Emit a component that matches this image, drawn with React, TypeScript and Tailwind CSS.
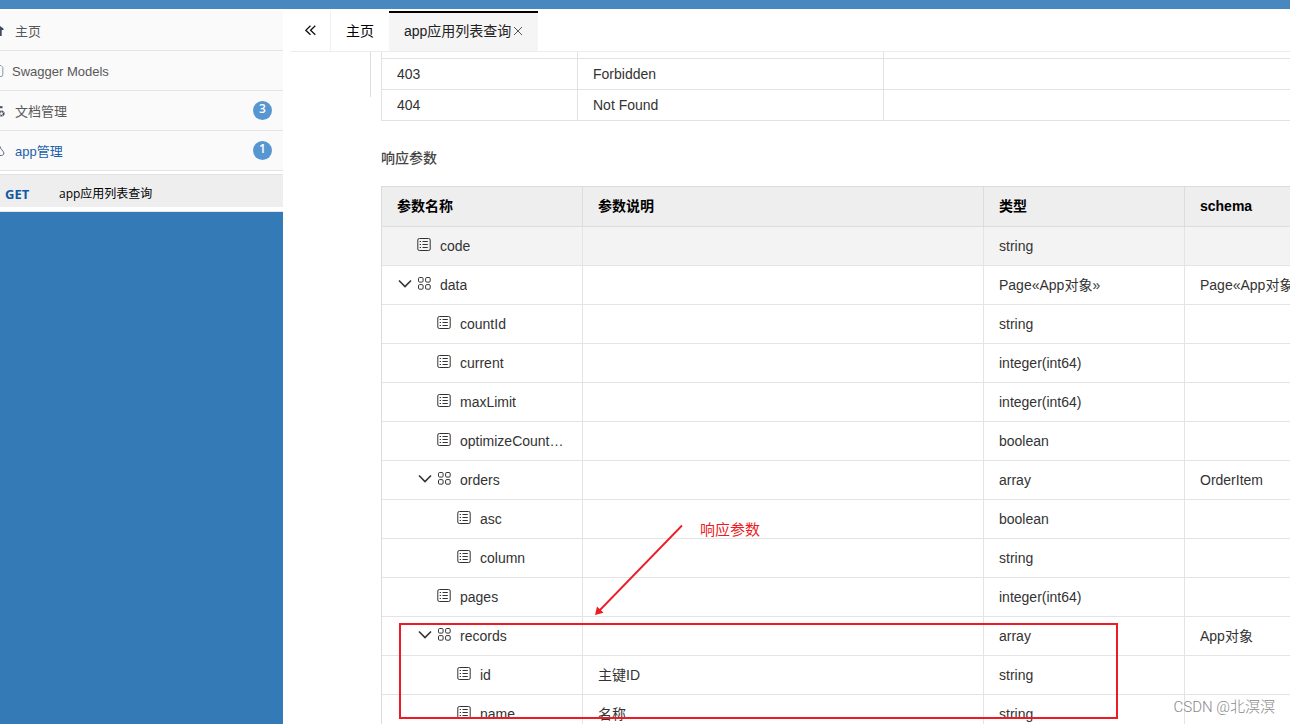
import React from "react";

const cjk = "font-['Liberation_Sans','Noto_Sans_CJK_SC',sans-serif]";

type Param = {
  name: string;
  level: number;
  group?: boolean;
  desc?: string;
  type: string;
  schema?: string;
};

const params: Param[] = [
  { name: "code", level: 0, type: "string" },
  { name: "data", level: 0, group: true, type: "Page«App对象»", schema: "Page«App对象»" },
  { name: "countId", level: 1, type: "string" },
  { name: "current", level: 1, type: "integer(int64)" },
  { name: "maxLimit", level: 1, type: "integer(int64)" },
  { name: "optimizeCountSql", level: 1, type: "boolean" },
  { name: "orders", level: 1, group: true, type: "array", schema: "OrderItem" },
  { name: "asc", level: 2, type: "boolean" },
  { name: "column", level: 2, type: "string" },
  { name: "pages", level: 1, type: "integer(int64)" },
  { name: "records", level: 1, group: true, type: "array", schema: "App对象" },
  { name: "id", level: 2, desc: "主键ID", type: "string" },
  { name: "name", level: 2, desc: "名称", type: "string" },
];

const indents = ["pl-0", "pl-5", "pl-10"];

function LeafIcon() {
  return (
    <svg width="14" height="14" viewBox="0 0 14 14" fill="none" stroke="#333" className="shrink-0">
      <rect x="0.8" y="0.5" width="12.4" height="12" rx="1.5" />
      <path d="M2.7 3.5h1.300M5.500 3.500h5.300M2.700 6.500h1.300M5.500 6.500h5.300M2.700 9.500h1.300M5.500 9.500h5.300" />
    </svg>
  );
}

function GroupIcon() {
  return (
    <svg width="14" height="14" viewBox="0 0 14 14" fill="none" stroke="#333" className="shrink-0">
      <rect x="1.500" y="0.500" width="4.600" height="4.600" rx="1.200" />
      <rect x="8.600" y="0.500" width="4.600" height="4.600" rx="1.200" />
      <rect x="1.500" y="7.600" width="4.600" height="4.600" rx="1.200" />
      <rect x="8.600" y="7.600" width="4.600" height="4.600" rx="1.200" />
    </svg>
  );
}

function HomeIcon() {
  return (
    <svg width="13" height="13" viewBox="0 0 13 13" fill="#3f4a66">
      <path d="M5.500 0 11.500 4.500v1.500H9.700V12H6.500V8H4.500v4H1.500V6H0V4.500z" />
    </svg>
  );
}

function ModelIcon() {
  return (
    <svg width="13" height="13" viewBox="0 0 13 13" fill="none" stroke="#8298ac">
      <path d="M1.500 3.500h5.500v9h-5.500zM4.500 3V1.500h4.500l1.800 1.800v7.500q0 1.700-1.700 1.700H7" />
    </svg>
  );
}

function CogsIcon() {
  return (
    <svg width="14" height="14" viewBox="0 0 14 14" fill="none" stroke="#444c58">
      <circle cx="4" cy="5.500" r="3" strokeWidth="2" strokeDasharray="1.800 .6" />
      <circle cx="9.500" cy="9.500" r="2.200" strokeWidth="1.800" strokeDasharray="1.800 .5" />
      <path d="M8 3.200h2.500" strokeWidth="2" />
    </svg>
  );
}

function CloudIcon() {
  return (
    <svg width="13" height="13" viewBox="0 0 13 13" fill="none" stroke="#5c6a86">
      <path d="M3.500 11.500h6a2.300 2.300 0 0 0 1.800-3.800C10.500 6 9 5.500 8.500 4 8.200 2 7 1.500 6 1.500c-2 0-3 2-3 4-3 1-3 6 .5 6z" />
    </svg>
  );
}

const menu = [
  { label: "主页", icon: <HomeIcon />, box: "w-[23px]" },
  { label: "Swagger Models", icon: <ModelIcon />, box: "w-5" },
  { label: "文档管理", icon: <CogsIcon />, box: "w-[23px]", count: 3 },
  { label: "app管理", icon: <CloudIcon />, box: "w-[23px]", count: 1, active: true },
];

function Sidebar() {
  return (
    <nav className="w-[283px] shrink-0 overflow-hidden bg-[#337ab7]">
      <ul className="border-t-2 border-white bg-[#fafafa] text-[13px]">
        {menu.map((m) => (
          <li key={m.label} className="border-b border-[#e4e4e6]">
            <a
              href="#"
              className={`-ml-2 flex h-[39px] items-center pr-[11px] ${m.active ? "text-[#1a5fa8]" : "text-[#585858]"}`}
            >
              <span className={`shrink-0 ${m.box}`}>{m.icon}</span>
              <span className="flex-1 pt-0.5">{m.label}</span>
              {m.count && (
                <span className="size-[19px] rounded-full bg-[#5796d0] text-center font-['Open_Sans',sans-serif] text-xs leading-4 font-semibold text-white">
                  {m.count}
                </span>
              )}
            </a>
          </li>
        ))}
      </ul>
      <div className="border-b border-[#e5e5e5] bg-white pt-[3px] pb-1">
        <a
          href="#"
          className="flex h-[33px] items-center border-t border-[#e0e2e6] bg-[#eee] pt-1.5 pl-[5px] font-['Open_Sans','Noto_Sans_CJK_SC',sans-serif] text-xs leading-4 text-black"
        >
          <span className="w-[54px] text-[13px] font-bold text-[#0f59a5]">GET</span>
          <span>app应用列表查询</span>
        </a>
      </div>
    </nav>
  );
}

function TabBar() {
  return (
    <div className="flex h-[43px] shrink-0 border-b border-[#ececec] pt-[2px] text-sm text-black">
      <button type="button" aria-label="收起" className="flex w-10 items-center justify-center border-r border-[#f0f0f0] pb-0.5">
        <svg width="11" height="11" viewBox="0 0 11 11" fill="none" stroke="#111" strokeWidth="1.300">
          <path d="M5.500 .8.8 5.300l4.700 4.500M10.300.8 5.600 5.300l4.700 4.500" />
        </svg>
      </button>
      <button type="button" className="w-[58px]">主页</button>
      <div className="flex items-center border-t-2 border-black bg-[#f5f5f5] px-[15px] pb-0.5 text-[#222]">
        <button type="button">app应用列表查询</button>
        <button type="button" aria-label="关闭" className="ml-0.5">
          <svg width="10" height="10" viewBox="0 0 10 10" stroke="#555" fill="none">
            <path d="m1 1 8 8M9 1 1 9" />
          </svg>
        </button>
      </div>
    </div>
  );
}

function StatusTable() {
  const cell = "border-r border-b border-[#e2e2e2] px-[15px]";
  return (
    <table className="w-[1205px] table-fixed border-separate border-spacing-0 border-l border-[#e2e2e2]">
      <colgroup>
        <col className="w-[196px]" />
        <col className="w-[306px]" />
        <col />
      </colgroup>
      <tbody>
        <tr className="h-[7px]">
          <td className={cell} />
          <td className={cell} />
          <td className={cell} />
        </tr>
        {[
          ["403", "Forbidden"],
          ["404", "Not Found"],
        ].map(([code, text]) => (
          <tr key={code} className="h-[31px]">
            <td className={cell}>{code}</td>
            <td className={cell}>{text}</td>
            <td className={cell} />
          </tr>
        ))}
      </tbody>
    </table>
  );
}

function ParamTable() {
  const cell = "border-r border-b border-[#e4e4e4] px-[15px]";
  return (
    <table className="w-[1205px] table-fixed border-separate border-spacing-0 border-t border-l border-[#dcdcdc]">
      <colgroup>
        <col className="w-[201px]" />
        <col className="w-[401px]" />
        <col className="w-[201px]" />
        <col className="w-[401px]" />
      </colgroup>
      <thead>
        <tr className="h-10 bg-[#eee] text-left text-black">
          {["参数名称", "参数说明", "类型", "schema"].map((h) => (
            <th key={h} className="border-r border-b border-[#dcdcdc] px-[15px] pb-0.5 font-bold">
              {h}
            </th>
          ))}
        </tr>
      </thead>
      <tbody>
        {params.map((p, i) => (
          <tr key={p.name} className={`h-[39px] ${i === 0 ? "bg-[#f3f3f3]" : ""}`}>
            <td className={cell}>
              <div className={`flex items-center ${indents[p.level]}`}>
                <span className="-mt-1 w-5 shrink-0 pl-px">
                  {p.group && (
                    <svg width="14" height="14" viewBox="0 0 14 14" fill="none" stroke="#333" strokeWidth="1.600">
                      <path d="m1 4.500 6 6 6-6" />
                    </svg>
                  )}
                </span>
                <span className="-mt-0.5 w-[23px] shrink-0">{p.group ? <GroupIcon /> : <LeafIcon />}</span>
                <span className="truncate">{p.name}</span>
              </div>
            </td>
            <td className={cell}>{p.desc}</td>
            <td className={cell}>{p.type}</td>
            <td className={cell}>{p.schema}</td>
          </tr>
        ))}
      </tbody>
    </table>
  );
}

function Annotations() {
  return (
    <div className="pointer-events-none absolute inset-0">
      <div className="absolute top-[623px] left-[399px] h-24 w-[719px] border-2 border-[#ed1c24]" />
      <svg className="absolute top-[520px] left-[590px]" width="100" height="100" viewBox="0 0 100 100">
        <path d="M92 5.500 9 91" stroke="#ed1c24" strokeWidth="1.800" />
        <path d="m5 95 2-8.500 6.500 6.300z" fill="#ed1c24" />
      </svg>
      <span className="absolute top-[519px] left-[700px] text-[15px] leading-[22px] text-[#ed1c24]">响应参数</span>
      <span className="absolute right-[15px] bottom-[7px] font-['Roboto','Noto_Sans_CJK_SC',sans-serif] text-[15px] leading-5 font-light text-[#888]">
        CSDN @北溟溟
      </span>
    </div>
  );
}

export default function App() {
  return (
    <div className={`relative flex h-screen flex-col overflow-hidden bg-white leading-5 ${cjk}`}>
      <header className="h-[9px] shrink-0 bg-[#4888be]" />
      <div className="flex min-h-0 flex-1">
        <Sidebar />
        <main className="ml-2 flex min-w-0 flex-1 flex-col">
          <TabBar />
          <div className="flex min-h-0 flex-1 overflow-hidden text-sm leading-5 text-[#333]">
            <div className="mr-2.5 h-[45px] w-20 shrink-0 border-r border-[#ddd]" />
            <div className="min-w-0 flex-1 overflow-hidden">
              <StatusTable />
              <h2 className="mt-[27px] mb-[18px] font-medium text-[#444]">响应参数</h2>
              <ParamTable />
            </div>
          </div>
        </main>
      </div>
      <Annotations />
    </div>
  );
}
